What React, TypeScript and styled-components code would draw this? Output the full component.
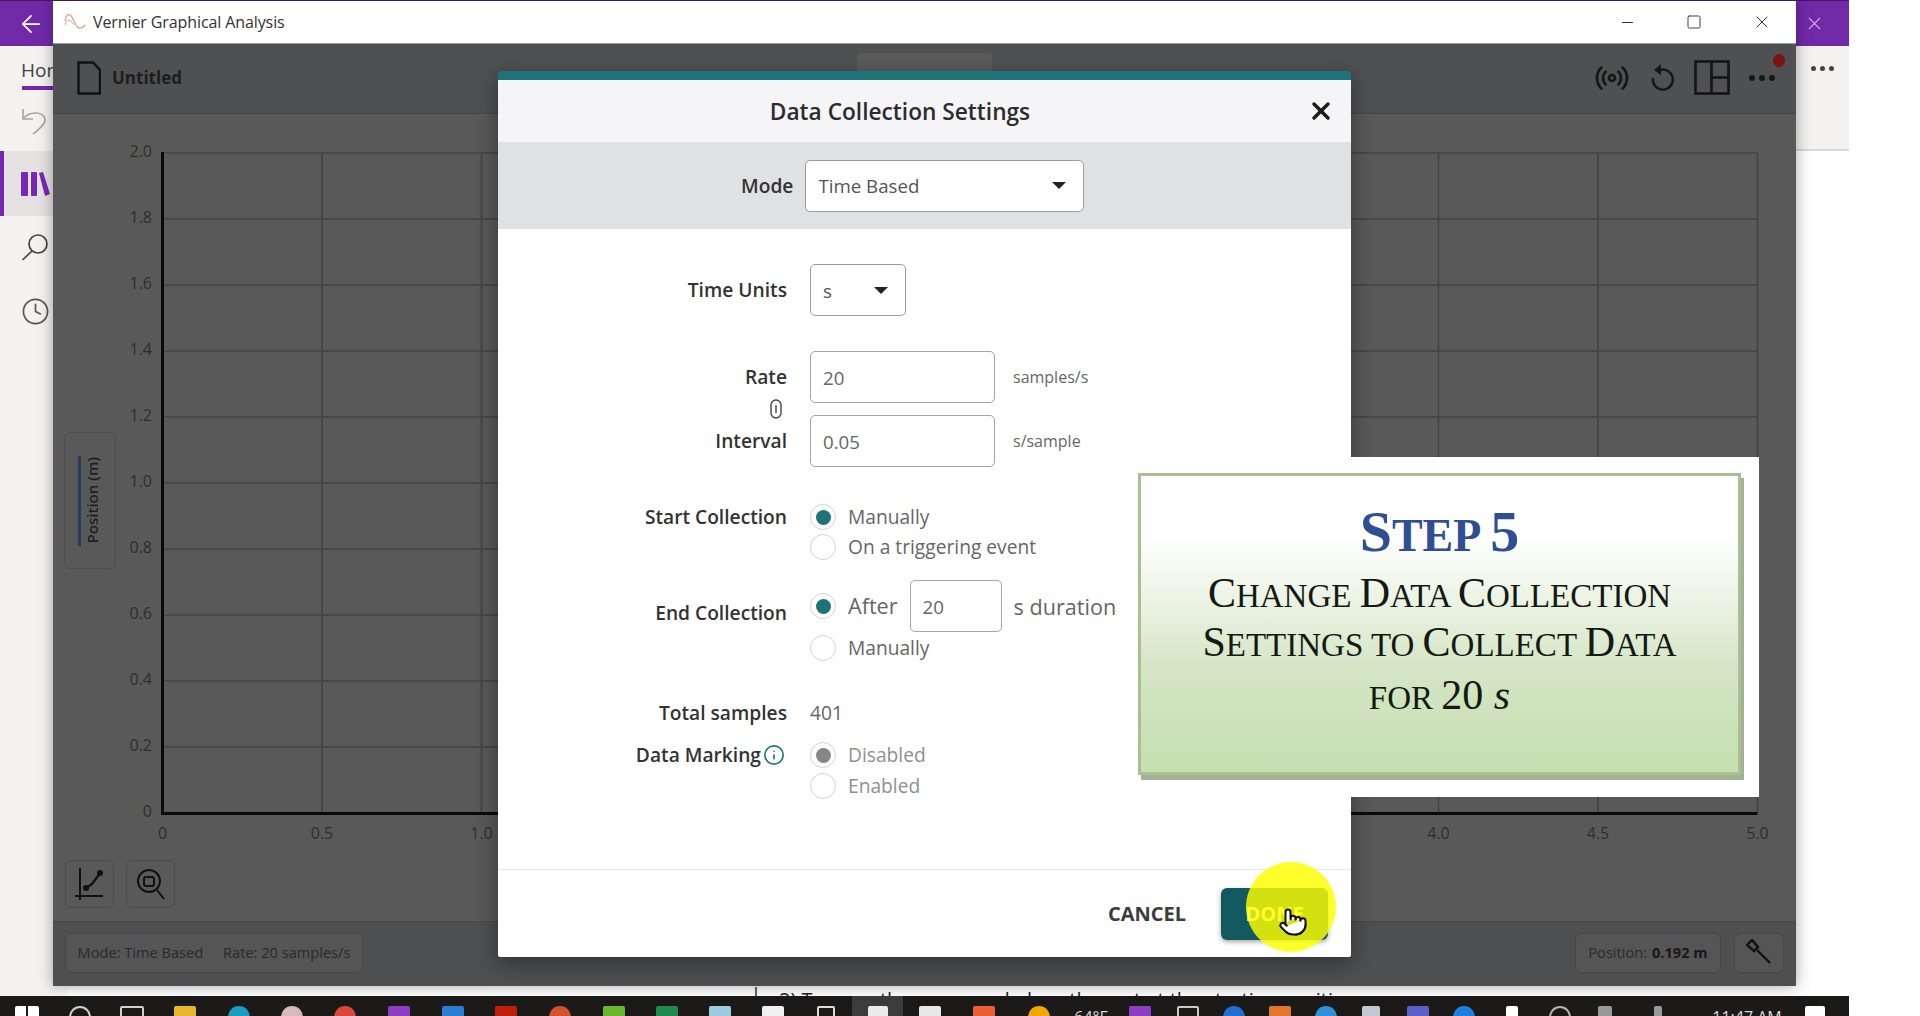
import React from "react";
import styled, { createGlobalStyle } from "styled-components";
import { ArrowLeft, Clock, Info, Minus, Pointer, Radio, Square, X } from "lucide-react";

const GlobalStyle = createGlobalStyle`
    html, body {
        margin: 0;
        padding: 0;
        background: #ffffff;
        font-family: "Open Sans", "Liberation Sans", sans-serif;
    }
`;

const Desktop = styled.div`
    position: relative;
    width: 1920px;
    height: 1016px;
    overflow: hidden;
    background: #ffffff;
    display: flex;
    flex-direction: column;
`;

/* OneNote, behind the app window */
const NoteApp = styled.div`
    flex: 1;
    width: 1849px;
    display: flex;
    flex-direction: column;
    overflow: hidden;
`;

const NoteTopBar = styled.div`
    height: 46px;
    flex-shrink: 0;
    background: #702aa8;
    border-top: 1px solid #3d1a5c;
    box-sizing: border-box;
    display: flex;
    justify-content: space-between;
    align-items: center;
    color: #ffffff;
    padding: 0 24px 0 17px;
`;

const CloseMark = styled.span`
    display: flex;
    color: #d9a6ea;
`;

const NoteBody = styled.div`
    flex: 1;
    display: flex;
`;

const NoteRail = styled.div`
    width: 68px;
    background: linear-gradient(90deg, #f3f2f1 80%, #fbfbfa);
    display: flex;
    flex-direction: column;
`;

const NoteTab = styled.div`
    height: 44px;
    padding: 11px 0 0 21px;
    box-sizing: border-box;
    font-size: 19px;
    line-height: 26px;
    color: #444444;
    position: relative;
    &::after {
        content: "";
        position: absolute;
        left: 22px;
        top: 40px;
        width: 40px;
        height: 4px;
        background: #702aa8;
    }
`;

const RailButton = styled.div<{ $active?: boolean; $h: number }>`
    height: ${props => props.$h}px;
    display: flex;
    align-items: center;
    padding-left: ${props => props.$active ? 17 : 21}px;
    color: #555555;
    background: ${props => props.$active ? "#e4e3e2" : "transparent"};
    border-left: ${props => props.$active ? "4px solid #7629b0" : "0"};
`;

const NoteContent = styled.div`
    flex: 1;
    position: relative;
    display: flex;
    flex-direction: column;
`;

const NoteRibbon = styled.div`
    height: 105px;
    box-sizing: border-box;
    background: #f3f2f1;
    border-bottom: 2px solid #d9d8d7;
    display: flex;
    justify-content: flex-end;
    padding: 20px 15px 0 0;
`;

const NotePage = styled.div`
    flex: 1;
    display: flex;
    align-items: flex-end;
    padding-left: 687px;
    font-size: 20px;
    color: #222222;
    white-space: nowrap;
`;

const NoteLine = styled.div`
    height: 9px;
    overflow: hidden;
    border-left: 2px solid #666666;
    padding-left: 22px;
    line-height: 25px;
`;

const DotsRow = styled.div`
    display: flex;
    gap: 4px;
`;

const Dot = styled.span<{ $size: number; $color: string }>`
    width: ${props => props.$size}px;
    height: ${props => props.$size}px;
    border-radius: 50%;
    background: ${props => props.$color};
`;

/* Taskbar */
const Taskbar = styled.div`
    height: 20px;
    width: 1849px;
    flex-shrink: 0;
    background: #1b1a19;
    display: flex;
    overflow: hidden;
`;

const TaskSlot = styled.div<{ $w: number; $active?: boolean }>`
    width: ${props => props.$w}px;
    flex-shrink: 0;
    display: flex;
    justify-content: center;
    padding-top: 10px;
    box-sizing: border-box;
    background: ${props => props.$active ? "#3c3c3c" : "transparent"};
`;

const TaskGlyph = styled.div<{ $color: string; $round?: boolean; $w?: number; $ring?: boolean }>`
    width: ${props => props.$w ?? 22}px;
    height: 22px;
    box-sizing: border-box;
    background: ${props => props.$ring ? "transparent" : props.$color};
    border: ${props => props.$ring ? `2px solid ${props.$color}` : "0"};
    border-radius: ${props => props.$round ? "50%" : "2px"};
`;

const TaskText = styled.div`
    color: #d8d8d8;
    font-size: 16px;
    line-height: 20px;
    margin-top: 1px;
    white-space: nowrap;
`;

/* App window, floats over OneNote */
const AppWindow = styled.div`
    position: absolute;
    left: 53px;
    top: 0;
    width: 1743px;
    height: 986px;
    display: flex;
    flex-direction: column;
    background: #595959;
    box-shadow: 0 0 14px rgba(0, 0, 0, 0.35);
`;

const TitleBar = styled.div`
    height: 44px;
    flex-shrink: 0;
    box-sizing: border-box;
    background: #ffffff;
    border-top: 1px solid #3d1a5c;
    border-bottom: 1px solid #9a9a9a;
    display: flex;
    align-items: center;
    padding-left: 11px;
`;

const TitleText = styled.div`
    margin-left: 7px;
    font-size: 16px;
    color: #333333;
    letter-spacing: -0.1px;
    flex: 1;
`;

const WindowControls = styled.div`
    display: flex;
    align-items: center;
    gap: 50px;
    padding-right: 24px;
    color: #333333;
`;

const Toolbar = styled.div`
    height: 70px;
    flex-shrink: 0;
    background: #4f5051;
    border-bottom: 1px solid #454646;
    box-sizing: border-box;
    display: flex;
    align-items: center;
    padding: 0 21px 2px 24px;
    position: relative;
    color: #161616;
`;

const DocName = styled.div`
    margin-left: 11px;
    font-weight: 700;
    font-size: 17px;
    color: #1d1d1d;
    flex: 1;
`;

const HiddenTab = styled.div`
    position: absolute;
    left: 804px;
    top: 9px;
    width: 135px;
    height: 30px;
    background: #5b5b5b;
    border-radius: 4px 4px 0 0;
`;

const ToolIcons = styled.div`
    display: flex;
    align-items: center;
    gap: 19px;
`;

const Notify = styled.span`
    position: absolute;
    right: 11px;
    top: 10px;
    width: 12px;
    height: 13px;
    border-radius: 50%;
    background: #7a1410;
`;

const ChartArea = styled.div`
    flex: 1;
    position: relative;
    background: #595959;
`;

const ChartSvg = styled.svg`
    display: block;
    width: 100%;
    height: 100%;
    font-family: "Open Sans", sans-serif;
    font-size: 16px;
`;

const AxisTitle = styled.div`
    position: absolute;
    left: 11px;
    top: 318px;
    width: 52px;
    height: 137px;
    box-sizing: border-box;
    padding-left: 13px;
    border: 1px solid #4f4f4f;
    border-radius: 6px;
    display: flex;
    align-items: center;
    gap: 1px;
`;

const AxisSwatch = styled.span`
    width: 3px;
    height: 90px;
    background: #2a3a5c;
`;

const AxisLabel = styled.span`
    writing-mode: vertical-rl;
    transform: rotate(180deg);
    font-size: 15px;
    font-weight: 600;
    color: #1f1f1f;
`;

const ChartButtons = styled.div`
    position: absolute;
    left: 12px;
    bottom: 13px;
    display: flex;
    gap: 12px;
`;

const ChartButton = styled.div`
    width: 49px;
    height: 48px;
    box-sizing: border-box;
    border: 1px solid #4c4c4c;
    border-radius: 6px;
    display: flex;
    align-items: center;
    justify-content: center;
`;

const StatusBar = styled.div`
    height: 65px;
    flex-shrink: 0;
    box-sizing: border-box;
    background: #4e4f50;
    border-top: 1px solid #484848;
    display: flex;
    justify-content: space-between;
    padding: 11px 12px 0;
`;

const StatusBox = styled.div<{ $w: number }>`
    width: ${props => props.$w}px;
    height: 40px;
    box-sizing: border-box;
    padding-bottom: 2px;
    background: #555555;
    border: 1px solid #484848;
    border-radius: 6px;
    display: flex;
    align-items: center;
    justify-content: center;
    font-size: 14.6px;
    color: #2a2a2a;
    white-space: nowrap;
`;

const StatusGroup = styled.div`
    display: flex;
    gap: 13px;
`;

const StatusItem = styled.span`
    margin-right: 20px;
    &:last-child {
        margin-right: 0;
    }
`;

const StatusValue = styled.b`
    margin-left: 5px;
    color: #181818;
`;

/* Dialog */
const Dialog = styled.div`
    position: absolute;
    left: 498px;
    top: 71px;
    width: 853px;
    height: 886px;
    display: flex;
    flex-direction: column;
    background: #ffffff;
    border-top: 9px solid #1d7478;
    border-radius: 4px 4px 2px 2px;
    box-sizing: border-box;
    box-shadow: 0 6px 22px rgba(0, 0, 0, 0.4);
    color: #333333;
`;

const DialogHeader = styled.div`
    height: 62px;
    flex-shrink: 0;
    box-sizing: border-box;
    padding-right: 49px;
    background: #f5f5f7;
    display: flex;
    align-items: center;
    justify-content: center;
    position: relative;
    font-size: 22.7px;
    font-weight: 600;
    color: #2c2c2c;
`;

const CloseButton = styled.div`
    position: absolute;
    right: 16px;
    top: 17px;
    display: flex;
    color: #1c1c1c;
`;

const ModeRow = styled.div`
    height: 87px;
    flex-shrink: 0;
    background: #e0e1e3;
    display: flex;
    align-items: center;
    padding-left: 243px;
    gap: 12px;
    font-size: 19.2px;
    font-weight: 600;
`;

const Select = styled.div<{ $w: number }>`
    width: ${props => props.$w}px;
    height: 52px;
    box-sizing: border-box;
    background: #ffffff;
    border: 1px solid #9c9c9c;
    border-radius: 5px;
    display: flex;
    align-items: center;
    justify-content: space-between;
    padding: 0 17px 0 12px;
    font-size: 18.7px;
    font-weight: 400;
    color: #555555;
`;

const Caret = styled.span`
    width: 0;
    height: 0;
    border-left: 7px solid transparent;
    border-right: 7px solid transparent;
    border-top: 7px solid #222222;
`;

const DialogBody = styled.div`
    flex: 1;
    padding-top: 35px;
`;

const FormRow = styled.div<{ $top?: number; $center?: boolean }>`
    display: grid;
    grid-template-columns: 289px 1fr;
    column-gap: 23px;
    margin-top: ${props => props.$top ?? 0}px;
    align-items: ${props => props.$center ? "center" : "start"};
`;

const Label = styled.div<{ $pad?: number }>`
    text-align: right;
    font-size: 19.2px;
    font-weight: 600;
    line-height: 26px;
    padding-top: ${props => props.$pad ?? 0}px;
    color: #333333;
    display: flex;
    justify-content: flex-end;
    align-items: center;
    gap: 2px;
    white-space: nowrap;
`;

const InfoIcon = styled(Info)`
    margin-right: 2px;
    color: #1d7478;
`;

const InputRow = styled.div`
    display: flex;
    align-items: center;
`;

const TextInput = styled.div<{ $w: number }>`
    width: ${props => props.$w}px;
    height: 52px;
    flex-shrink: 0;
    box-sizing: border-box;
    border: 1px solid #a5a5a5;
    border-radius: 5px;
    display: flex;
    align-items: center;
    padding-left: 12px;
    font-size: 18.7px;
    color: #666666;
`;

const Unit = styled.span`
    margin-left: 18px;
    font-size: 16px;
    color: #666666;
`;

const LinkSpacer = styled.div`
    height: 12px;
    display: grid;
    grid-template-columns: 289px;
    justify-items: end;
`;

const LinkIcon = styled.svg`
    margin-top: -4px;
    margin-right: 5px;
`;

const RadioGroup = styled.div<{ $gap: number }>`
    display: flex;
    flex-direction: column;
    gap: ${props => props.$gap}px;
`;

const RadioRow = styled.div<{ $muted?: boolean; $big?: boolean }>`
    display: flex;
    align-items: center;
    gap: 12px;
    min-height: 26px;
    font-size: ${props => props.$big ? 21.6 : 19.2}px;
    line-height: 26px;
    color: ${props => props.$muted ? "#8f8f8f" : "#666666"};
    white-space: nowrap;
`;

const RadioDot = styled.span<{ $on?: boolean; $color?: string }>`
    width: 26px;
    height: 26px;
    box-sizing: border-box;
    border: 1px solid #d4d4d4;
    border-radius: 50%;
    flex-shrink: 0;
    display: flex;
    align-items: center;
    justify-content: center;
    &::after {
        content: "";
        width: 15px;
        height: 15px;
        border-radius: 50%;
        background: ${props => props.$on ? (props.$color ?? "#1d7478") : "transparent"};
    }
`;

const AfterInput = styled(TextInput)`
    margin-left: 12px;
`;

const Duration = styled.span`
    margin-left: 12px;
    font-size: 21.6px;
    color: #666666;
    white-space: nowrap;
`;

const PlainValue = styled.div`
    font-size: 19.2px;
    line-height: 26px;
    color: #666666;
`;

const DialogFooter = styled.div`
    height: 88px;
    flex-shrink: 0;
    border-top: 1px solid #e8e8e8;
    box-sizing: border-box;
    display: flex;
    align-items: center;
    justify-content: flex-end;
    padding: 0 23px 0 0;
    gap: 35px;
    font-size: 20px;
    font-weight: 700;
`;

const CancelButton = styled.div`
    color: #3c3c3c;
`;

const DoneButton = styled.div`
    width: 107px;
    height: 52px;
    background: #125a60;
    border-radius: 6px;
    display: flex;
    align-items: center;
    justify-content: center;
    color: #ffffff;
    box-shadow: 0 2px 5px rgba(0, 0, 0, 0.35);
`;

/* Lesson overlay and pointer highlight */
const StepPanel = styled.div`
    position: absolute;
    left: 1130px;
    top: 457px;
    width: 629px;
    height: 340px;
    box-sizing: border-box;
    padding: 16px 0 0 8px;
    background: #ffffff;
`;

const StepCard = styled.div`
    width: 603px;
    height: 302px;
    box-sizing: border-box;
    border: 3px solid #a9c190;
    box-shadow: 3px 5px 0 #a3b199;
    background: linear-gradient(180deg, #ffffff 20%, #e6f0dd 48%, #d5e6c6 64%, #c6deb0 100%);
    display: flex;
    flex-direction: column;
    align-items: center;
    font-family: "Liberation Serif", serif;
    text-transform: uppercase;
    color: #141a12;
    white-space: nowrap;
`;

const StepTitle = styled.div`
    font-size: 46px;
    font-weight: 700;
    line-height: 60px;
    margin-top: 26px;
    color: #2f4f93;
`;

const StepLine = styled.div<{ $top: number }>`
    font-size: 33px;
    line-height: 44px;
    margin-top: ${props => props.$top}px;
`;

const Cap = styled.span<{ $size: number }>`
    font-size: ${props => props.$size}px;
`;

const NumberText = styled.span`
    font-size: 42px;
    text-transform: none;
`;

const Highlight = styled.div`
    position: absolute;
    left: 1246px;
    top: 862px;
    width: 90px;
    height: 90px;
    border-radius: 50%;
    background: rgba(255, 255, 0, 0.82);
    filter: blur(0.6px);
`;

const HandCursor = styled.div`
    position: absolute;
    left: 1278px;
    top: 907px;
    display: flex;
    color: #111111;
`;

const xLabels = ["0", "0.5", "1.0", "1.5", "2.0", "2.5", "3.0", "3.5", "4.0", "4.5", "5.0"];
const yLabels = ["2.0", "1.8", "1.6", "1.4", "1.2", "1.0", "0.8", "0.6", "0.4", "0.2", "0"];

const taskItems: { w: number; color?: string; round?: boolean; ring?: boolean; text?: string; active?: boolean; gw?: number }[] = [
    { w: 53, color: "linear-gradient(90deg, #ffffff 46%, transparent 46% 54%, #ffffff 54%)", gw: 24 },
    { w: 54, color: "#d0d0d0", round: true, ring: true },
    { w: 50, color: "#d0d0d0", ring: true, gw: 24 },
    { w: 55, color: "#e8b52e" },
    { w: 53, color: "#1e9bc0", round: true },
    { w: 53, color: "#d8b8b8", round: true },
    { w: 54, color: "#d9483b", round: true },
    { w: 54, color: "#8c3fc2" },
    { w: 53, color: "#2b7cd3" },
    { w: 54, color: "#bf1e0c" },
    { w: 54, color: "#d35230", round: true },
    { w: 53, color: "#6cb62e" },
    { w: 53, color: "#1f8a4c" },
    { w: 53, color: "#9fcbe0" },
    { w: 53, color: "#f0f0f0" },
    { w: 53, color: "#dcdcdc", ring: true, gw: 18 },
    { w: 51, color: "#ececec", active: true, gw: 20 },
    { w: 53, color: "#e8e8e8" },
    { w: 56, color: "#ec5f35" },
    { w: 54, color: "#f2a600", round: true },
    { w: 50, text: "64°F" },
    { w: 48, color: "#8c3fc2" },
    { w: 47, color: "#c8c8c8", ring: true, gw: 22 },
    { w: 46, color: "#1f6fd0", round: true },
    { w: 46, color: "#e2762a" },
    { w: 45, color: "#2f8fd8", round: true },
    { w: 46, color: "#c0c8d0", gw: 18 },
    { w: 47, color: "#5b5fc7" },
    { w: 46, color: "#1f7fe0", round: true },
    { w: 50, color: "#ffffff", gw: 12 },
    { w: 46, color: "#b5b5b5", round: true, ring: true },
    { w: 44, color: "#999999", gw: 14 },
    { w: 62, color: "#999999", gw: 8 },
    { w: 116, text: "11:47 AM" },
    { w: 20, color: "#ffffff" },
];

const VernierMark = () => (
    <svg width="22" height="20" viewBox="0 0 22 20" fill="none" stroke="#e39a96" strokeWidth="1.2">
        <path d="M1 9 C3 -1 7 2 10 9 S16 19 21 13" />
        <path d="M1 13 C3 5 7 8 10 13" stroke="#c9c9c9" />
    </svg>
);

const DocIcon = () => (
    <svg width="24" height="34" viewBox="0 0 24 34" fill="none" stroke="#111111" strokeWidth="2.4">
        <path d="M1.5 1.5H16L23 9V32.5H1.5Z" />
    </svg>
);

const ResetIcon = () => (
    <svg width="26" height="30" viewBox="0 0 26 30" fill="none" stroke="#161616" strokeWidth="2.4">
        <path d="M11 7 A10 10 0 1 1 4 15" />
        <path d="M12 1 L12 12 L5 7 Z" fill="#161616" strokeWidth="0" />
    </svg>
);

const LayoutIcon = () => (
    <svg width="36" height="35" viewBox="0 0 36 35" fill="none" stroke="#141414" strokeWidth="2.6">
        <rect x="1.5" y="1.5" width="33" height="32" />
        <path d="M17.5 1.5V33.5M17.5 17.5H34.5" />
    </svg>
);

const BooksIcon = () => (
    <svg width="29" height="24" viewBox="0 0 29 24" fill="#7629b0">
        <rect x="0" y="0" width="7" height="24" rx="1" />
        <rect x="10" y="0" width="6" height="24" rx="1" />
        <path d="M18 1 L22 0 L29 22 L24 24 Z" />
    </svg>
);

const UndoIcon = () => (
    <svg width="26" height="28" viewBox="0 0 26 28" fill="none" stroke="#a5a5a5" strokeWidth="1.6">
        <path d="M2 2V12H12" />
        <path d="M2 12 C8 4 22 4 24 12 C25 17 18 22 12 27" />
    </svg>
);

const LensIcon = () => (
    <svg width="27" height="27" viewBox="0 0 27 27" fill="none" stroke="#444444" strokeWidth="1.7">
        <circle cx="17" cy="10" r="9" />
        <path d="M11 17 L1.5 26" />
    </svg>
);

const GraphIcon = () => (
    <svg width="30" height="34" viewBox="0 0 30 34" fill="none" stroke="#111111" strokeWidth="2">
        <path d="M5 1V33M0 29H28" />
        <path d="M10 22 L17 17 L26 5" strokeWidth="2.4" />
        <circle cx="11" cy="21" r="2" fill="#111111" />
        <circle cx="25" cy="6" r="2" fill="#111111" />
    </svg>
);

const ZoomBoxIcon = () => (
    <svg width="28" height="32" viewBox="0 0 28 32" fill="none" stroke="#111111" strokeWidth="2">
        <circle cx="12" cy="13" r="11" />
        <rect x="7" y="9" width="10" height="9" rx="2" />
        <path d="M20 22 L27 31" />
    </svg>
);

const PlungerIcon = () => (
    <svg width="26" height="26" viewBox="0 0 26 26" fill="none" stroke="#111111" strokeWidth="2.4">
        <path d="M11 11 L24 24" />
        <path d="M1 6 L6 1 L12 8 L8 12 Z" />
    </svg>
);

export default function App() {
    return (
        <>
            <GlobalStyle />
            <Desktop>
                <NoteApp>
                    <NoteTopBar>
                        <ArrowLeft size={28} strokeWidth={1.5} />
                        <CloseMark><X size={21} strokeWidth={1.3} /></CloseMark>
                    </NoteTopBar>
                    <NoteBody>
                        <NoteRail>
                            <NoteTab>Home</NoteTab>
                            <RailButton $h={61}><UndoIcon /></RailButton>
                            <RailButton $h={65} $active><BooksIcon /></RailButton>
                            <RailButton $h={62}><LensIcon /></RailButton>
                            <RailButton $h={66}><Clock size={29} strokeWidth={1.4} /></RailButton>
                        </NoteRail>
                        <NoteContent>
                            <NoteRibbon>
                                <DotsRow>
                                    <Dot $size={5} $color="#444444" />
                                    <Dot $size={5} $color="#444444" />
                                    <Dot $size={5} $color="#444444" />
                                </DotsRow>
                            </NoteRibbon>
                            <NotePage>
                                <NoteLine>2) Turn on the sonar and place the cart at the starting position</NoteLine>
                            </NotePage>
                        </NoteContent>
                    </NoteBody>
                </NoteApp>
                <Taskbar>
                    {taskItems.map((item, i) => (
                        <TaskSlot key={i} $w={item.w} $active={item.active}>
                            {item.text
                                ? <TaskText>{item.text}</TaskText>
                                : <TaskGlyph $color={item.color ?? "#888888"} $round={item.round} $ring={item.ring} $w={item.gw} />}
                        </TaskSlot>
                    ))}
                </Taskbar>

                <AppWindow>
                    <TitleBar>
                        <VernierMark />
                        <TitleText>Vernier Graphical Analysis</TitleText>
                        <WindowControls>
                            <Minus size={17} strokeWidth={1.4} />
                            <Square size={16} strokeWidth={1.4} />
                            <X size={20} strokeWidth={1.2} />
                        </WindowControls>
                    </TitleBar>
                    <Toolbar>
                        <DocIcon />
                        <DocName>Untitled</DocName>
                        <HiddenTab />
                        <ToolIcons>
                            <Radio size={36} strokeWidth={1.8} />
                            <ResetIcon />
                            <LayoutIcon />
                            <DotsRow>
                                <Dot $size={6} $color="#161616" />
                                <Dot $size={6} $color="#161616" />
                                <Dot $size={6} $color="#161616" />
                            </DotsRow>
                        </ToolIcons>
                        <Notify />
                    </Toolbar>
                    <ChartArea>
                        <ChartSvg>
                            {Array.from({ length: 10 }, (_, i) => (
                                <line key={i} x1={109.5 + (i + 1) * 159.5} x2={109.5 + (i + 1) * 159.5} y1={39} y2={699} stroke="#434343" strokeWidth="1.6" />
                            ))}
                            {Array.from({ length: 10 }, (_, i) => (
                                <line key={i} x1={109.5} x2={1704.5} y1={39 + i * 66} y2={39 + i * 66} stroke="#434343" strokeWidth="1.6" />
                            ))}
                            <path d="M109.5 38V699.5H1704.5" fill="none" stroke="#0a0a0a" strokeWidth="3" />
                            {yLabels.map((t, i) => (
                                <text key={t} x={99} y={43 + i * 66} textAnchor="end" fill="#2e2e2e">{t}</text>
                            ))}
                            {xLabels.map((t, i) => (
                                <text key={t} x={109.5 + i * 159.5} y={725} textAnchor="middle" fill="#2e2e2e">{t}</text>
                            ))}
                        </ChartSvg>
                        <AxisTitle>
                            <AxisSwatch />
                            <AxisLabel>Position (m)</AxisLabel>
                        </AxisTitle>
                        <ChartButtons>
                            <ChartButton><GraphIcon /></ChartButton>
                            <ChartButton><ZoomBoxIcon /></ChartButton>
                        </ChartButtons>
                    </ChartArea>
                    <StatusBar>
                        <StatusBox $w={298}>
                            <StatusItem>Mode: Time Based</StatusItem>
                            <StatusItem>Rate: 20 samples/s</StatusItem>
                        </StatusBox>
                        <StatusGroup>
                            <StatusBox $w={146}>Position:<StatusValue>0.192 m</StatusValue></StatusBox>
                            <StatusBox $w={50}><PlungerIcon /></StatusBox>
                        </StatusGroup>
                    </StatusBar>
                </AppWindow>

                <Dialog>
                    <DialogHeader>
                        Data Collection Settings
                        <CloseButton><X size={28} strokeWidth={3} /></CloseButton>
                    </DialogHeader>
                    <ModeRow>
                        Mode
                        <Select $w={279}>Time Based<Caret /></Select>
                    </ModeRow>
                    <DialogBody>
                        <FormRow $center>
                            <Label>Time Units</Label>
                            <Select $w={96}>s<Caret /></Select>
                        </FormRow>
                        <FormRow $center $top={35}>
                            <Label>Rate</Label>
                            <InputRow>
                                <TextInput $w={185}>20</TextInput>
                                <Unit>samples/s</Unit>
                            </InputRow>
                        </FormRow>
                        <LinkSpacer>
                            <LinkIcon width="12" height="20" viewBox="0 0 12 20" fill="none" stroke="#444444" strokeWidth="1.4">
                                <rect x="1" y="1" width="10" height="18" rx="5" />
                                <path d="M6 6V14" />
                            </LinkIcon>
                        </LinkSpacer>
                        <FormRow $center>
                            <Label>Interval</Label>
                            <InputRow>
                                <TextInput $w={185}>0.05</TextInput>
                                <Unit>s/sample</Unit>
                            </InputRow>
                        </FormRow>
                        <FormRow $top={37}>
                            <Label>Start Collection</Label>
                            <RadioGroup $gap={4}>
                                <RadioRow><RadioDot $on />Manually</RadioRow>
                                <RadioRow><RadioDot />On a triggering event</RadioRow>
                            </RadioGroup>
                        </FormRow>
                        <FormRow $top={20}>
                            <Label $pad={20}>End Collection</Label>
                            <RadioGroup $gap={3}>
                                <InputRow>
                                    <RadioRow $big><RadioDot $on />After</RadioRow>
                                    <AfterInput $w={92}>20</AfterInput>
                                    <Duration>s duration</Duration>
                                </InputRow>
                                <RadioRow><RadioDot />Manually</RadioRow>
                            </RadioGroup>
                        </FormRow>
                        <FormRow $top={39}>
                            <Label>Total samples</Label>
                            <PlainValue>401</PlainValue>
                        </FormRow>
                        <FormRow $top={16}>
                            <Label>Data Marking<InfoIcon size={22} strokeWidth={1.8} /></Label>
                            <RadioGroup $gap={5}>
                                <RadioRow $muted><RadioDot $on $color="#868686" />Disabled</RadioRow>
                                <RadioRow $muted><RadioDot />Enabled</RadioRow>
                            </RadioGroup>
                        </FormRow>
                    </DialogBody>
                    <DialogFooter>
                        <CancelButton>CANCEL</CancelButton>
                        <DoneButton>DONE</DoneButton>
                    </DialogFooter>
                </Dialog>

                <StepPanel>
                    <StepCard>
                        <StepTitle><Cap $size={58}>S</Cap>tep <Cap $size={58}>5</Cap></StepTitle>
                        <StepLine $top={5}><Cap $size={42}>C</Cap>hange <Cap $size={42}>D</Cap>ata <Cap $size={42}>C</Cap>ollection</StepLine>
                        <StepLine $top={2}><Cap $size={42}>S</Cap>ettings to <Cap $size={42}>C</Cap>ollect <Cap $size={42}>D</Cap>ata</StepLine>
                        <StepLine $top={6}>for <NumberText>20 <i>s</i></NumberText></StepLine>
                    </StepCard>
                </StepPanel>

                <Highlight />
                <HandCursor><Pointer size={30} strokeWidth={1.6} fill="#ffffff" /></HandCursor>
            </Desktop>
        </>
    );
}
